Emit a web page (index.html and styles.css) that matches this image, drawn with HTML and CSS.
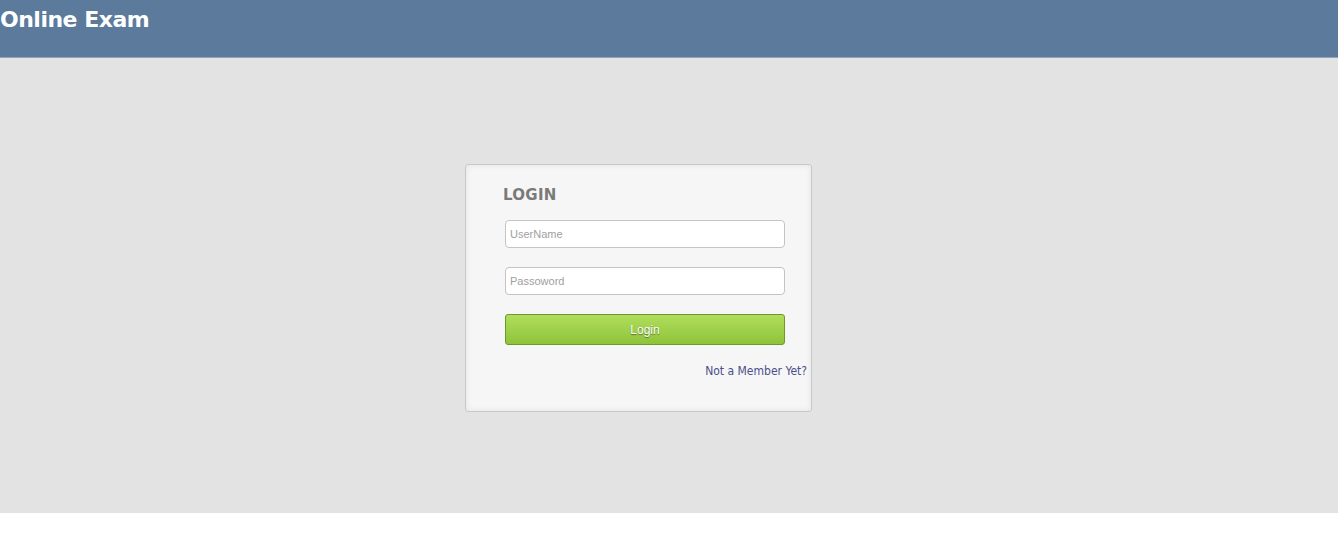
FILE: index.html
```html
<!DOCTYPE html>
<html>
<head>
<meta charset="utf-8">
<title>Online Exam</title>
<link rel="stylesheet" href="styles.css">
</head>
<body>
<header class="topbar">
  <h1 class="brand">Online Exam</h1>
</header>
<main class="stage">
  <section class="card">
    <h2 class="card-title">LOGIN</h2>
    <form class="login-form">
      <input class="field" type="text" placeholder="UserName">
      <input class="field" type="password" placeholder="Passoword">
      <button class="btn" type="button">Login</button>
    </form>
    <div class="card-foot"><a class="link" href="#">Not a Member Yet?</a></div>
  </section>
</main>
</body>
</html>
```
FILE: styles.css
```css
* { box-sizing: border-box; }
html, body { margin: 0; padding: 0; background: #fff; }
body { font-family: "Liberation Sans", Arial, sans-serif; }

.topbar {
  height: 58px;
  background: #5b7a9c;
  border-bottom: 1px solid #8fa3ba;
}
.brand {
  margin: 0;
  padding: 5px 0 0 0;
  font-family: "DejaVu Sans", Verdana, sans-serif;
  font-weight: bold;
  font-size: 22px;
  line-height: 30px;
  color: #fff;
  letter-spacing: -0.5px;
}

.stage {
  background: #e3e3e3;
  height: 455px;
  padding: 106px 0 0 465px;
}

.card {
  width: 347px;
  height: 248px;
  background: #f6f6f6;
  border: 1px solid #c8c8c8;
  border-radius: 3px;
  box-shadow: inset 0 0 6px rgba(0,0,0,0.08);
  padding: 20px 4px 0 36px;
}
.card-title {
  margin: 0 0 15px 1px;
  font-family: "DejaVu Sans", Verdana, sans-serif;
  font-size: 15px;
  line-height: 20px;
  font-weight: bold;
  color: #7a7a7a;
  letter-spacing: 0.3px;
}
.login-form {
  display: flex;
  flex-direction: column;
  gap: 19px;
  width: 280px;
  margin-left: 3px;
}
.field {
  height: 28px;
  width: 280px;
  border: 1px solid #c4c4c4;
  border-radius: 4px;
  background: #fff;
  padding: 0 4px;
  font-family: "Liberation Sans", Arial, sans-serif;
  font-size: 11px;
  color: #555;
  outline: none;
}
.field::placeholder { color: #a0a0a0; }
.btn {
  height: 31px;
  width: 280px;
  border: 1px solid #6b9a27;
  border-radius: 3px;
  background: linear-gradient(#b0de5c, #8fc33b);
  color: #fff;
  font-family: "Liberation Sans", Arial, sans-serif;
  font-size: 12px;
  text-shadow: 0 1px 1px rgba(0,0,0,0.45);
  padding: 0;
  cursor: pointer;
}
.card-foot {
  display: flex;
  justify-content: flex-end;
  margin-top: 19px;
}
.link {
  font-family: "DejaVu Sans Condensed", "DejaVu Sans", sans-serif;
  font-size: 12px;
  line-height: 14px;
  color: #4a4f8c;
  text-decoration: none;
}
```
